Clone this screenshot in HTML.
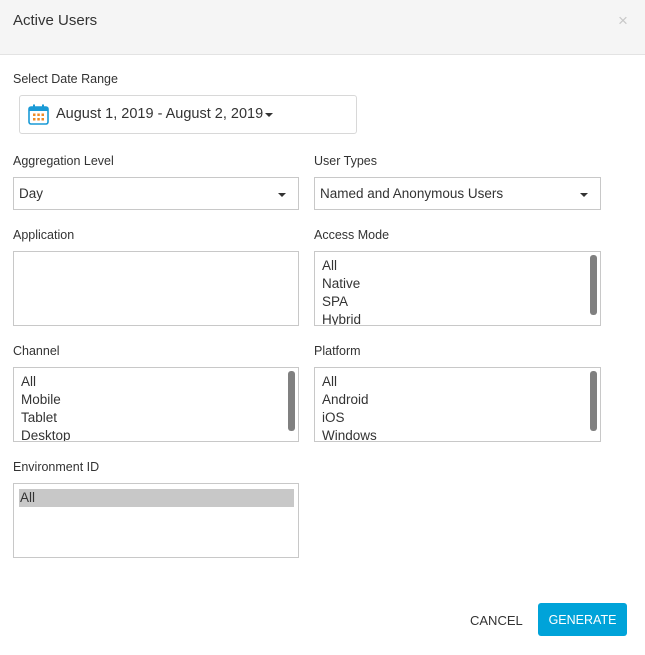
<!DOCTYPE html><html><head><style>
body{margin:0;width:645px;height:655px;background:#fff;font-family:"Liberation Sans",sans-serif;color:#333;position:relative;overflow:hidden}
.a{position:absolute}
.hdr{left:0;top:0;width:645px;height:54px;background:#f5f5f5;border-bottom:1px solid #e3e3e3}
.lbl{font-size:12.5px;color:#333}
.box{border:1px solid #c8c8c8;box-sizing:border-box;background:#fff}
.opt{position:absolute;left:7px;font-size:13.5px;line-height:18px;color:#333}
.sb{position:absolute;right:3px;top:3px;width:7px;height:60px;background:#808080;border-radius:3px}
.car{position:absolute;width:0;height:0;border-left:4px solid transparent;border-right:4px solid transparent;border-top:4px solid #333}
</style></head><body>
<div class="a hdr"></div>
<div class="a" style="left:13px;top:12px;font-size:15px;color:#333">Active Users</div>
<div class="a" style="left:618px;top:11px;font-size:17px;color:#c8c8c8">×</div>

<div class="a lbl" style="left:13px;top:72px">Select Date Range</div>
<div class="a box" style="left:19px;top:95px;width:338px;height:39px;border-radius:3px;border-color:#d8d8d8">
<svg class="a" style="left:8px;top:8px" width="21" height="21" viewBox="0 0 21 21"><rect x="1" y="3" width="19" height="17" rx="2" fill="none" stroke="#1a9ad6" stroke-width="1.6"/><rect x="1" y="3" width="19" height="4" fill="#1a9ad6"/><rect x="5" y="0.5" width="2" height="4" fill="#1a9ad6"/><rect x="14" y="0.5" width="2" height="4" fill="#1a9ad6"/><g fill="#f08a24"><rect x="5" y="9.5" width="2.5" height="2.5"/><rect x="9.3" y="9.5" width="2.5" height="2.5"/><rect x="13.5" y="9.5" width="2.5" height="2.5"/><rect x="5" y="14" width="2.5" height="2.5"/><rect x="9.3" y="14" width="2.5" height="2.5"/><rect x="13.5" y="14" width="2.5" height="2.5"/></g></svg>
<div class="a" style="left:36px;top:10px;font-size:14.5px">August 1, 2019 - August 2, 2019</div>
<div class="car" style="left:245px;top:17px"></div>
</div>

<div class="a lbl" style="left:13px;top:154px">Aggregation Level</div>
<div class="a box" style="left:13px;top:177px;width:286px;height:33px"><div class="opt" style="left:5px;top:7px">Day</div><div class="car" style="left:264px;top:15px"></div></div>
<div class="a lbl" style="left:314px;top:154px">User Types</div>
<div class="a box" style="left:314px;top:177px;width:287px;height:33px"><div class="opt" style="left:5px;top:7px">Named and Anonymous Users</div><div class="car" style="left:265px;top:15px"></div></div>

<div class="a lbl" style="left:13px;top:228px">Application</div>
<div class="a box" style="left:13px;top:251px;width:286px;height:75px"></div>
<div class="a lbl" style="left:314px;top:228px">Access Mode</div>
<div class="a box" style="left:314px;top:251px;width:287px;height:75px;overflow:hidden"><div class="opt" style="top:5px">All<br>Native<br>SPA<br>Hybrid</div><div class="sb"></div></div>

<div class="a lbl" style="left:13px;top:344px">Channel</div>
<div class="a box" style="left:13px;top:367px;width:286px;height:75px;overflow:hidden"><div class="opt" style="top:5px">All<br>Mobile<br>Tablet<br>Desktop</div><div class="sb"></div></div>
<div class="a lbl" style="left:314px;top:344px">Platform</div>
<div class="a box" style="left:314px;top:367px;width:287px;height:75px;overflow:hidden"><div class="opt" style="top:5px">All<br>Android<br>iOS<br>Windows</div><div class="sb"></div></div>

<div class="a lbl" style="left:13px;top:460px">Environment ID</div>
<div class="a box" style="left:13px;top:483px;width:286px;height:75px"><div class="a" style="left:5px;top:5px;width:275px;height:18px;background:#c8c8c8"></div><div class="opt" style="left:6px;top:5px">All</div></div>

<div class="a" style="left:470px;top:613px;font-size:13px;color:#333">CANCEL</div>
<div class="a" style="left:538px;top:603px;width:89px;height:33px;background:#00a3d9;border-radius:3px;color:#fff;font-size:12.5px;text-align:center;line-height:34px">GENERATE</div>
</body></html>
